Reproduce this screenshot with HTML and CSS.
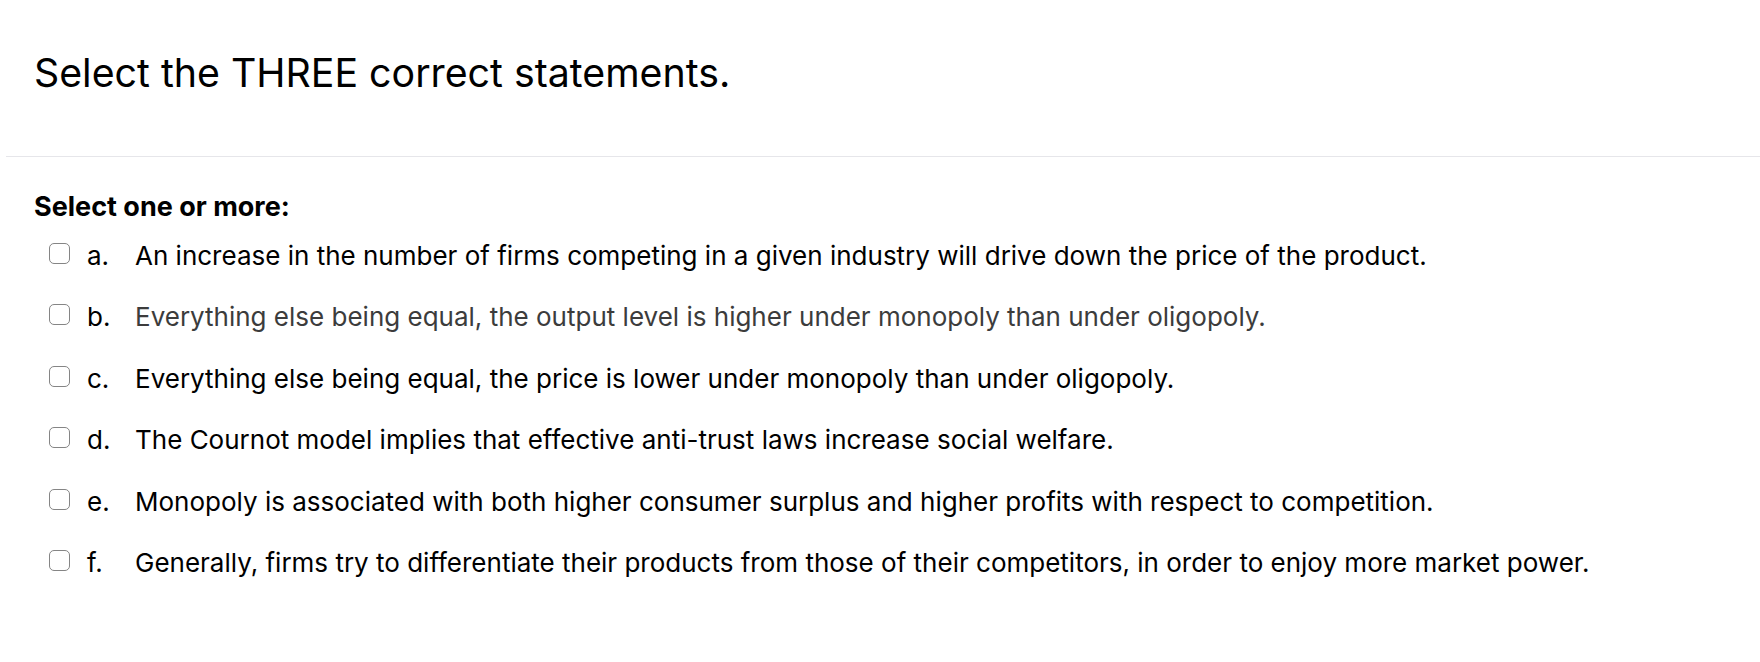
FILE: index.html
```html
<!DOCTYPE html>
<html lang="en">
<head>
<meta charset="utf-8">
<title>Question</title>
<link rel="stylesheet" href="styles.css">
</head>
<body>
<div class="question">
  <div class="qtext">
    <h1 class="title">Select the THREE correct statements.</h1>
  </div>
  <div class="divider"></div>
  <div class="answers">
    <div class="prompt">Select one or more:</div>
    <div class="options">
      <div class="option"><span class="box"></span><span class="letter">a.</span><span class="text">An increase in the number of firms competing in a given industry will drive down the price of the product.</span></div>
      <div class="option dim"><span class="box"></span><span class="letter">b.</span><span class="text">Everything else being equal, the output level is higher under monopoly than under oligopoly.</span></div>
      <div class="option"><span class="box"></span><span class="letter">c.</span><span class="text">Everything else being equal, the price is lower under monopoly than under oligopoly.</span></div>
      <div class="option"><span class="box"></span><span class="letter">d.</span><span class="text">The Cournot model implies that effective anti-trust laws increase social welfare.</span></div>
      <div class="option"><span class="box"></span><span class="letter">e.</span><span class="text">Monopoly is associated with both higher consumer surplus and higher profits with respect to competition.</span></div>
      <div class="option"><span class="box"></span><span class="letter">f.</span><span class="text">Generally, firms try to differentiate their products from those of their competitors, in order to enjoy more market power.</span></div>
    </div>
  </div>
</div>
</body>
</html>
```
FILE: styles.css
```css
html, body {
  margin: 0;
  padding: 0;
  background: #ffffff;
}
body {
  font-family: Inter, "Noto Sans", sans-serif;
  color: #000000;
}
.qtext {
  padding: 48.5px 34px 0 34px;
}
.title {
  margin: 0;
  font-size: 39.3px;
  font-weight: 400;
  line-height: 48px;
}
.divider {
  margin: 59.5px 0 0 6px;
  height: 1px;
  background: #e6e6ea;
}
.answers {
  padding: 32.7px 34px 0 34px;
}
.prompt {
  font-size: 27px;
  font-weight: 700;
  line-height: 33px;
}
.options {
  display: flex;
  flex-direction: column;
  gap: 29.5px;
  margin-top: 17px;
  padding-left: 15px;
}
.option {
  display: flex;
  align-items: flex-start;
  font-size: 26px;
  line-height: 32px;
}
.option.dim {
  color: #3c3c3c;
}
.option.dim .letter {
  color: #000000;
}
.box {
  flex: none;
  box-sizing: border-box;
  width: 21px;
  height: 21px;
  margin-top: 3.3px;
  border: 1.5px solid #858585;
  border-radius: 5px;
  background: #ffffff;
}
.letter {
  flex: none;
  width: 48px;
  margin-left: 17px;
}
.text {
  flex: 1;
}
```
